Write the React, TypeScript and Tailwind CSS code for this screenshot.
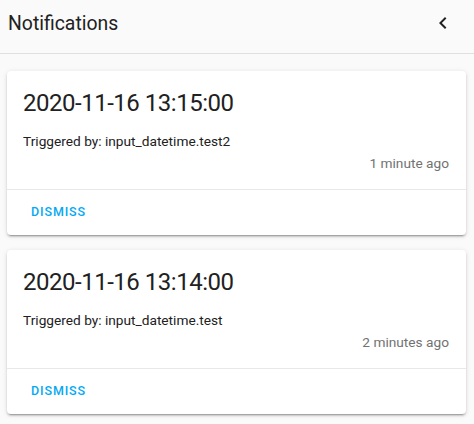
import React from 'react'

type Notification = {
    id: string
    title: string
    message: string
    ago: string
}

const notifications: Notification[] = [
    { id: 'n1', title: '2020-11-16 13:15:00', message: 'Triggered by: input_datetime.test2', ago: '1 minute ago' },
    { id: 'n2', title: '2020-11-16 13:14:00', message: 'Triggered by: input_datetime.test', ago: '2 minutes ago' },
]

function NotificationCard({ n }: { n: Notification }) {
    return (
        <div className="bg-white rounded-[4px] shadow-[0_2px_2px_0_rgba(0,0,0,0.14),0_1px_5px_0_rgba(0,0,0,0.12),0_3px_1px_-2px_rgba(0,0,0,0.2)]">
            <div className="px-4 pt-4 pb-4">
                <h2 className="text-[24px] leading-[32px] text-[#212121] tracking-[-0.02em]">{n.title}</h2>
                <p className="mt-[12px] text-[13.7px] leading-[20px] text-[#212121]">{n.message}</p>
                <div className="mt-[2px] text-right pr-[1px] text-[13.7px] leading-[20px] text-[#727272]">{n.ago}</div>
            </div>
            <div className="border-t border-[#e8e8e8] px-2 h-[46px] flex items-center">
                <button className="px-4 h-9 text-[12.5px] font-medium uppercase tracking-[0.07em] text-[#03a9f4]">
                    Dismiss
                </button>
            </div>
        </div>
    )
}

export default function App() {
    return (
        <div className="w-[474px] h-[424px] bg-[#fafafa] overflow-hidden" style={{ fontFamily: 'Roboto, "Noto Sans", sans-serif' }}>
            {/* header */}
            <header className="h-[54px] border-b border-[#e0e0e0] flex items-center justify-between pl-2 pr-[19px]">
                <span className="text-[19.4px] text-[#212121] -mt-[6px]">Notifications</span>
                <svg width="24" height="24" viewBox="0 0 24 24" className="-mt-[8px]">
                    <path d="M15.41,16.58L10.83,12L15.41,7.41L14,6L8,12L14,18L15.41,16.58Z" fill="#212121" />
                </svg>
            </header>

            <div className="pl-[7px] pr-2 pt-[17px] flex flex-col gap-[15px]">
                {notifications.map((n) => (
                    <NotificationCard key={n.id} n={n} />
                ))}
            </div>
        </div>
    )
}
